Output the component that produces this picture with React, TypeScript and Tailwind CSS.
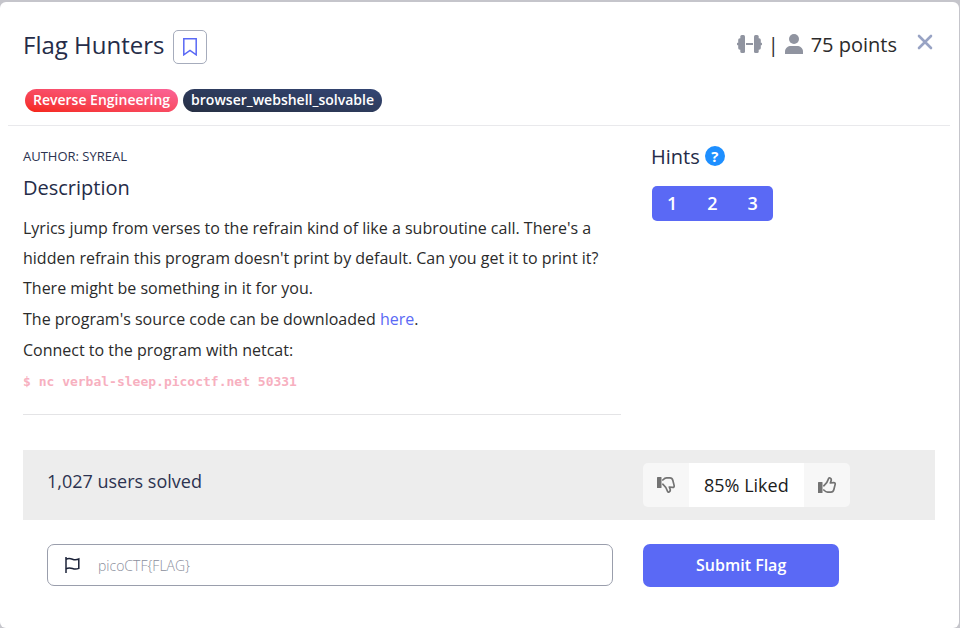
import { useState } from "react";

const TAGS = [
  { label: "Reverse Engineering", className: "bg-linear-to-tr from-[#f5230f] to-[#fb6398]" },
  { label: "browser_webshell_solvable", className: "bg-linear-to-tr from-[#273044] to-[#344675]" },
];

const HINTS = [1, 2, 3];

const BookmarkIcon = () => (
  <svg width="14" height="18" viewBox="0 0 14 18" fill="none" stroke="#5a69f5" strokeWidth="1.5" aria-hidden="true">
    <path d="M.8.8h12.4v16L7 12.4.8 16.8z" />
  </svg>
);

const DumbbellIcon = () => (
  <svg width="25" height="20" viewBox="0 0 25 20" fill="#9094a0" aria-hidden="true">
    <rect x="3.300" y="0" width="4.700" height="18" rx="1.500" />
    <rect x="17" y="0" width="4.700" height="18" rx="1.500" />
    <path d="M4 3.300H3c-1.200 0-1.800.8-1.800 2v2.500H.6a.6.6 0 0 0-.6.6v1.200c0 .4.3.6.6.6h.6v2.500c0 1.200.6 2 1.800 2h1zM21 3.300h1c1.200 0 1.800.8 1.800 2v2.500h.6c.3 0 .6.3.6.6v1.200c0 .4-.3.6-.6.6h-.6v2.500c0 1.200-.6 2-1.800 2h-1z" />
    <rect x="9" y="8" width="7" height="2" />
  </svg>
);

const PersonIcon = () => (
  <svg width="18" height="22" viewBox="0 0 18 22" fill="#9094a0" aria-hidden="true">
    <circle cx="9" cy="5" r="5" />
    <path d="M0 20v-2.500C0 14 3 12 6 12h6c3 0 6 2 6 5.500V20z" />
  </svg>
);

const ThumbIcon = ({ down = false }: { down?: boolean }) => (
  <svg
    width="18"
    height="16"
    viewBox="0 0 18 16"
    fill="none"
    className={down ? "-scale-y-100" : ""}
    aria-hidden="true"
  >
    <rect x="0" y="5" width="4.500" height="11" rx=".6" fill="#737373" />
    <path
      d="M5.800 8.800C8 6.800 9.700 4.800 10.300 2.200c.3-1.200 1-1.500 1.800-1.100 1.100.5 1.400 1.600 1 2.800L12.300 6l3.300-.4c1.200-.1 1.800.8 1.500 2l-1.300 5.200c-.4 1.500-1.300 2.300-2.800 2.300H9.600c-1.500 0-2.600-.9-3.800-2.100"
      stroke="#737373"
      strokeWidth="1.700"
      strokeLinejoin="round"
      strokeLinecap="round"
    />
  </svg>
);

const FlagIcon = () => (
  <svg width="15" height="16" viewBox="0 0 15 16" fill="none" stroke="#1b2238" strokeWidth="1.500" aria-hidden="true">
    <path d="M1 0v16" />
    <path d="M1 2.200C3.500 1 5.500 1.400 7.500 2.200s4 .8 6.300-.2v9.400c-2.300 1-4.300.9-6.300.1S3.500 10.500 1 11.700" />
  </svg>
);

const CloseIcon = () => (
  <svg width="16" height="16" viewBox="0 0 16 16" stroke="#98a3c4" strokeWidth="2.600" strokeLinecap="round" aria-hidden="true">
    <path d="M2 2l12 12M14 2L2 14" />
  </svg>
);

export default function App() {
  const [flag, setFlag] = useState("");

  return (
    <div className="min-h-screen bg-[#c5c5cb] pt-0.5 pr-px font-['Open_Sans',sans-serif] text-[#2b2b2b]">
      <div role="dialog" aria-labelledby="challenge-title" className="min-h-[calc(100vh-2px)] rounded-md bg-white pr-[9px] pl-2">
        <header className="border-b border-[#e9e9ec] pt-7 pr-[17px] pb-[13px] pl-[15px]">
          <div className="flex items-start justify-between">
            <div className="flex items-start gap-[9px]">
              <h1 id="challenge-title" className="text-[24px] leading-[30px] text-[#252c48]">Flag Hunters</h1>
              <button
                type="button"
                aria-label="Bookmark"
                className="flex size-[34px] items-center justify-center rounded-[5px] border border-[#a6acbc]"
              >
                <BookmarkIcon />
              </button>
            </div>
            <div className="flex items-start gap-5">
              <div className="flex items-center gap-1.5 text-[20px] leading-[30px]">
                <DumbbellIcon />
                <span>|</span>
                <PersonIcon />
                <span className="pl-0.5">75 points</span>
              </div>
              <button type="button" aria-label="Close" className="pt-1">
                <CloseIcon />
              </button>
            </div>
          </div>
          <div className="mt-[25px] flex gap-[5px] pl-0.5">
            {TAGS.map((tag) => (
              <span
                key={tag.label}
                className={`rounded-full px-2 pb-px text-[14px] leading-[22px] font-semibold text-white ${tag.className}`}
              >
                {tag.label}
              </span>
            ))}
          </div>
        </header>

        <main>
          <div className="grid grid-cols-[2fr_1fr] pt-5">
            <section className="px-[15px]">
              <p className="text-[13px] leading-5 text-[#2c3350]">AUTHOR: SYREAL</p>
              <h2 className="mt-1.5 text-[20px] leading-8 text-[#252c48]">Description</h2>
              <div className="mt-[9px] flex flex-col gap-px text-[16px] leading-[30px]">
                <p>
                  Lyrics jump from verses to the refrain kind of like a subroutine call. There's a hidden refrain this
                  program doesn't print by default. Can you get it to print it? There might be something in it for you.
                </p>
                <p>
                  The program's source code can be downloaded{" "}
                  <a href="#source" className="text-[#5a69f5]">here</a>.
                </p>
                <p>Connect to the program with netcat:</p>
                <code className="pt-px font-['DejaVu_Sans_Mono',monospace] text-[13px] font-bold text-[#f7b0bf]">
                  $ nc verbal-sleep.picoctf.net 50331
                </code>
              </div>
              <hr className="mt-[17px] border-[#e4e4e6]" />
            </section>

            <aside className="px-[15px]">
              <div className="flex items-start gap-[5px]">
                <h2 className="text-[20px] leading-[22px] text-[#252c48]">Hints</h2>
                <button
                  type="button"
                  aria-label="About hints"
                  className="flex size-5 items-center justify-center rounded-full bg-[#1e8fff] text-[15px] font-bold text-white"
                >
                  ?
                </button>
              </div>
              <div className="mt-[18px] ml-px inline-flex overflow-hidden rounded-[5px]">
                {HINTS.map((hint) => (
                  <button
                    key={hint}
                    type="button"
                    className="bg-[#5a69f5] px-[15px] text-[18px] leading-[35px] font-semibold text-white"
                  >
                    {hint}
                  </button>
                ))}
              </div>
            </aside>
          </div>

          <div className="mx-[15px] mt-[35px] grid grid-cols-[2fr_1fr] bg-[#ededed] py-[13px]">
            <p className="pt-1 pl-6 text-[18px] leading-7 text-[#2c3350]">1,027 users solved</p>
            <div className="pl-3">
              <div className="inline-flex h-11 overflow-hidden rounded-[5px] bg-[#f7f7f7]">
                <button type="button" aria-label="Dislike" className="flex w-[46px] items-center justify-center">
                  <ThumbIcon down />
                </button>
                <span className="bg-white px-[15px] text-[18px] leading-11 text-[#1c1c1c]">85% Liked</span>
                <button type="button" aria-label="Like" className="flex w-[46px] items-center justify-center">
                  <ThumbIcon />
                </button>
              </div>
            </div>
          </div>

          <form className="mx-[15px] grid grid-cols-[2fr_1fr] py-6" onSubmit={(e) => e.preventDefault()}>
            <div className="pr-[18px] pl-6">
              <label className="flex h-[42px] items-center gap-[18px] rounded-[7px] border border-[#9a9eac] px-[17px]">
                <FlagIcon />
                <input
                  type="text"
                  aria-label="Flag"
                  value={flag}
                  onChange={(e) => setFlag(e.target.value)}
                  placeholder="picoCTF{FLAG}"
                  className="min-w-0 flex-1 text-[14px] placeholder:font-light placeholder:text-[#8a8e9c] focus:outline-none"
                />
              </label>
            </div>
            <div className="pl-3">
              <button
                type="submit"
                className="rounded-[7px] bg-[#5a69f5] px-[53px] text-[16px] leading-[43px] font-semibold text-white"
              >
                Submit Flag
              </button>
            </div>
          </form>
        </main>
      </div>
    </div>
  );
}
